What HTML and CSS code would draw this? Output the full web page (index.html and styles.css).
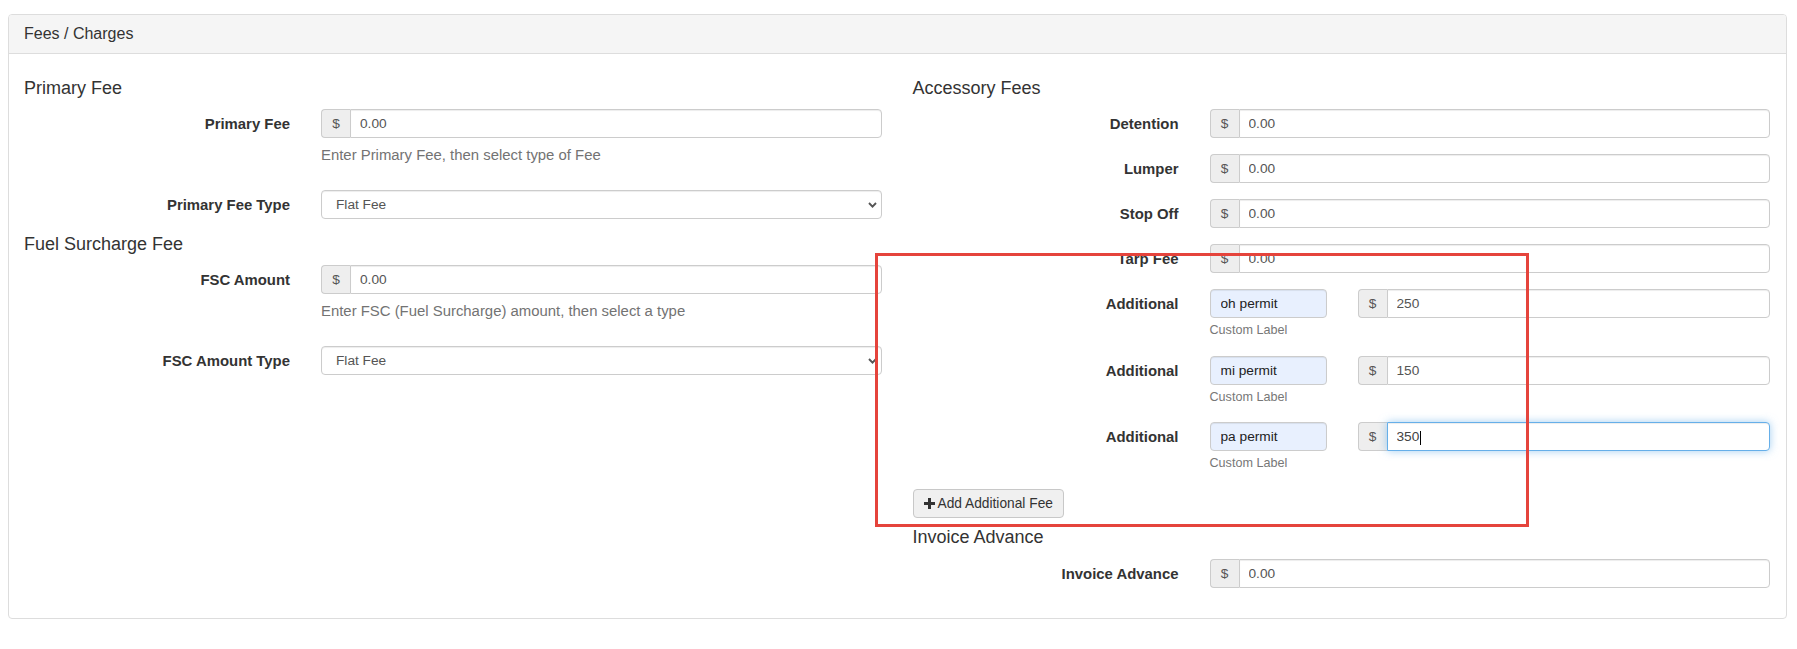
FILE: index.html
```html
<!DOCTYPE html>
<html lang="en">
<head>
<meta charset="utf-8">
<title>Fees / Charges</title>
<link rel="stylesheet" href="styles.css">
</head>
<body>
<div class="panel">
  <div class="panel-heading">Fees / Charges</div>
  <div class="panel-body">
    <div class="col">
      <h4 class="section-title">Primary Fee</h4>
      <div class="form-group">
        <label class="form-label">Primary Fee</label>
        <div class="field">
          <div class="input-group"><span class="addon">$</span><input class="form-control" value="0.00"></div>
          <p class="help">Enter Primary Fee, then select type of Fee</p>
        </div>
      </div>
      <div class="form-group">
        <label class="form-label">Primary Fee Type</label>
        <div class="field select-wrap">
          <select class="form-control select"><option>Flat Fee</option></select>
          <svg class="chevron" width="9" height="6" viewBox="0 0 9 6"><path d="M1 1 L4.5 4.6 L8 1" fill="none" stroke="#555" stroke-width="1.9"/></svg>
        </div>
      </div>
      <h4 class="section-title tight">Fuel Surcharge Fee</h4>
      <div class="form-group">
        <label class="form-label">FSC Amount</label>
        <div class="field">
          <div class="input-group"><span class="addon">$</span><input class="form-control" value="0.00"></div>
          <p class="help">Enter FSC (Fuel Surcharge) amount, then select a type</p>
        </div>
      </div>
      <div class="form-group">
        <label class="form-label">FSC Amount Type</label>
        <div class="field select-wrap">
          <select class="form-control select"><option>Flat Fee</option></select>
          <svg class="chevron" width="9" height="6" viewBox="0 0 9 6"><path d="M1 1 L4.5 4.6 L8 1" fill="none" stroke="#555" stroke-width="1.9"/></svg>
        </div>
      </div>
    </div>

    <div class="col">
      <h4 class="section-title">Accessory Fees</h4>
      <div class="form-group">
        <label class="form-label">Detention</label>
        <div class="field"><div class="input-group"><span class="addon">$</span><input class="form-control" value="0.00"></div></div>
      </div>
      <div class="form-group">
        <label class="form-label">Lumper</label>
        <div class="field"><div class="input-group"><span class="addon">$</span><input class="form-control" value="0.00"></div></div>
      </div>
      <div class="form-group">
        <label class="form-label">Stop Off</label>
        <div class="field"><div class="input-group"><span class="addon">$</span><input class="form-control" value="0.00"></div></div>
      </div>
      <div class="form-group">
        <label class="form-label">Tarp Fee</label>
        <div class="field"><div class="input-group"><span class="addon">$</span><input class="form-control" value="0.00"></div></div>
      </div>
      <div class="form-group">
        <label class="form-label">Additional</label>
        <div class="field additional">
          <div class="custom">
            <input class="form-control autofill" value="oh permit">
            <p class="custom-help">Custom Label</p>
          </div>
          <div class="input-group grow"><span class="addon">$</span><input class="form-control" value="250"></div>
        </div>
      </div>
      <div class="form-group">
        <label class="form-label">Additional</label>
        <div class="field additional">
          <div class="custom">
            <input class="form-control autofill" value="mi permit">
            <p class="custom-help">Custom Label</p>
          </div>
          <div class="input-group grow"><span class="addon">$</span><input class="form-control" value="150"></div>
        </div>
      </div>
      <div class="form-group">
        <label class="form-label">Additional</label>
        <div class="field additional">
          <div class="custom">
            <input class="form-control autofill" value="pa permit">
            <p class="custom-help">Custom Label</p>
          </div>
          <div class="input-group grow has-caret"><span class="addon">$</span><input class="form-control focused" value="350"><span class="caret"></span></div>
        </div>
      </div>
      <button class="btn" type="button"><svg class="plus" width="11" height="11" viewBox="0 0 11 11"><rect x="4" y="0" width="3" height="11" fill="#333"/><rect x="0" y="4" width="11" height="3" fill="#333"/></svg>Add Additional Fee</button>
      <h4 class="section-title after-btn">Invoice Advance</h4>
      <div class="form-group last">
        <label class="form-label">Invoice Advance</label>
        <div class="field"><div class="input-group"><span class="addon">$</span><input class="form-control" value="0.00"></div></div>
      </div>
    </div>
  </div>
</div>
<div class="annotation"></div>
</body>
</html>
```

FILE: styles.css
```css
* { box-sizing: border-box; }

body {
  margin: 0;
  position: relative;
  background: #fff;
  font-family: "Liberation Sans", Arial, sans-serif;
  color: #333;
}

.panel {
  margin: 14px 10px 0 8px;
  border: 1px solid #ddd;
  border-radius: 4px;
  background: #fff;
}

.panel-heading {
  background: #f5f5f5;
  border-bottom: 1px solid #ddd;
  border-radius: 3px 3px 0 0;
  padding: 9px 15px;
  font-size: 16px;
  line-height: 20px;
  color: #333;
}

.panel-body {
  display: grid;
  grid-template-columns: 1fr 1fr;
  column-gap: 31px;
  align-items: start;
  padding: 24px 16px 30px 15px;
}

.section-title {
  margin: 0 0 11px;
  font-size: 18px;
  line-height: 20px;
  font-weight: normal;
  color: #333;
}

.section-title.tight { margin-top: -1px; }
.section-title.after-btn { margin-top: 9px; margin-bottom: 12px; }

.form-group {
  display: grid;
  grid-template-columns: 266px 1fr;
  column-gap: 31px;
  margin-bottom: 16px;
}

.form-group.last { margin-bottom: 0; }

.form-label {
  display: block;
  height: 29px;
  text-align: right;
  font-weight: bold;
  font-size: 14.9px;
  line-height: 31px;
  color: #333;
}

.field { min-width: 0; }

.input-group {
  display: flex;
  height: 29px;
}

.input-group.has-caret { position: relative; }

.caret {
  position: absolute;
  left: 62px;
  top: 9px;
  width: 1px;
  height: 14px;
  background: #000;
}

.addon {
  flex: 0 0 29px;
  height: 29px;
  display: flex;
  align-items: center;
  justify-content: center;
  background: #eee;
  border: 1px solid #ccc;
  border-right: 0;
  border-radius: 4px 0 0 4px;
  color: #555;
  font-size: 13.7px;
}

.form-control {
  display: block;
  width: 100%;
  height: 29px;
  margin: 0;
  padding: 0 9px;
  border: 1px solid #ccc;
  border-radius: 4px;
  background: #fff;
  color: #555;
  font-family: "Liberation Sans", Arial, sans-serif;
  font-size: 13.7px;
  box-shadow: inset 0 1px 1px rgba(0, 0, 0, 0.075);
  outline: none;
}

.input-group .form-control {
  flex: 1 1 auto;
  min-width: 0;
  border-radius: 0 4px 4px 0;
}

.form-control.focused {
  border-color: #66afe9;
  box-shadow: inset 0 1px 1px rgba(0, 0, 0, 0.075), 0 0 8px rgba(102, 175, 233, 0.6);
  color: #444;
}

.help {
  margin: 7px 0 9px;
  font-size: 14.9px;
  line-height: 20px;
  color: #737373;
}

.select-wrap { position: relative; }

.select {
  appearance: none;
  -webkit-appearance: none;
  padding: 0 14px;
  cursor: pointer;
}

.chevron {
  position: absolute;
  right: 5px;
  top: 12px;
}

.additional {
  display: flex;
  column-gap: 31px;
}

.custom { flex: 0 0 117px; }

.form-control.autofill {
  background: #e8f0fe;
  color: #222;
  padding-left: 10px;
}

.custom-help {
  margin: 4px 0 0;
  font-size: 12.6px;
  line-height: 17.5px;
  color: #777;
}

.grow { flex: 1 1 auto; }

.btn {
  display: inline-flex;
  align-items: center;
  height: 29px;
  padding: 0 10px;
  border: 1px solid #c8c8c8;
  border-radius: 4px;
  background: #f0f0f0;
  color: #333;
  font-family: "Liberation Sans", Arial, sans-serif;
  font-size: 13.75px;
  cursor: pointer;
}

.plus { margin-right: 3px; }

.annotation {
  position: absolute;
  left: 875px;
  top: 253px;
  width: 654px;
  height: 274px;
  border: 3px solid #e5443c;
  pointer-events: none;
}
```
